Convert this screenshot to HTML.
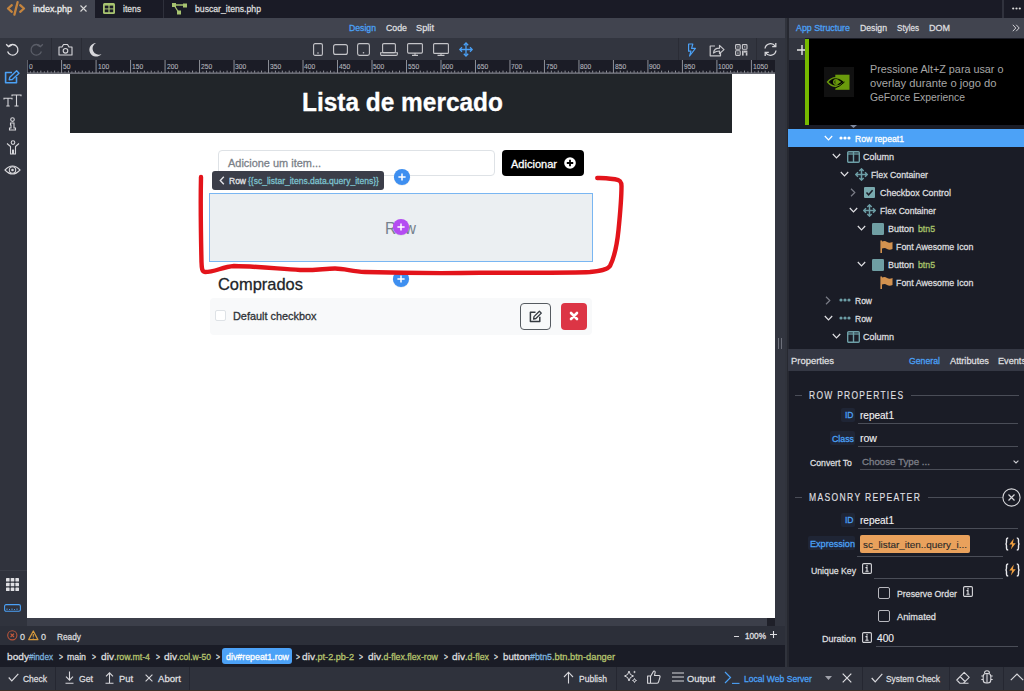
<!DOCTYPE html>
<html><head><meta charset="utf-8">
<style>
*{margin:0;padding:0;box-sizing:border-box}
html,body{width:1024px;height:691px;overflow:hidden;background:#1a1c26;font-family:"Liberation Sans",sans-serif}
.a{position:absolute;display:block}
.t{position:absolute;white-space:nowrap;line-height:1;transform-origin:0 0;-webkit-text-stroke:0.3px currentColor}
</style></head><body>
<div class="a" style="left:0px;top:0px;width:1024px;height:18px;background:#1a1b26;"></div>
<div class="a" style="left:0px;top:0px;width:95px;height:18px;background:#41444f;"></div>
<div class="a" style="left:163px;top:0px;width:1px;height:18px;background:#2e303b;"></div>
<div class="a" style="left:1002px;top:0px;width:2px;height:18px;background:#30323d;"></div>
<div class="a" style="left:0px;top:18px;width:785px;height:20px;background:#41444f;"></div>
<div class="a" style="left:0px;top:38px;width:785px;height:22px;background:#32353f;"></div>
<div class="a" style="left:51px;top:38px;width:1px;height:22px;background:#2a2c35;"></div>
<div class="a" style="left:81px;top:38px;width:1px;height:22px;background:#2a2c35;"></div>
<div class="a" style="left:678px;top:38px;width:1px;height:22px;background:#2a2c35;"></div>
<div class="a" style="left:756px;top:38px;width:1px;height:22px;background:#2a2c35;"></div>
<div class="a" style="left:0px;top:60px;width:27px;height:566px;background:#30333d;"></div>
<div class="a" style="left:0px;top:570px;width:27px;height:1px;background:#3a3d47;"></div>
<div class="a" style="left:27px;top:60px;width:748px;height:14px;background:#1b1c26;"></div>
<div class="a" style="left:27px;top:74px;width:748px;height:544px;background:#ffffff;"></div>
<div class="a" style="left:775px;top:60px;width:10px;height:566px;background:#32353f;"></div>
<div class="a" style="left:27px;top:618px;width:740px;height:8px;background:#3c3f4a;"></div>
<div class="a" style="left:767px;top:618px;width:8px;height:8px;background:#1f2029;"></div>
<div class="a" style="left:0px;top:626px;width:785px;height:19px;background:#2c2f39;"></div>
<div class="a" style="left:0px;top:645px;width:785px;height:22px;background:#1a1c26;"></div>
<div class="a" style="left:0px;top:667px;width:1024px;height:23px;background:#2f323c;"></div>
<div class="a" style="left:0px;top:690px;width:1024px;height:1px;background:#3b3029;"></div>
<div class="a" style="left:785px;top:18px;width:2px;height:649px;background:#30333c;"></div>
<div class="a" style="left:787px;top:18px;width:2px;height:649px;background:#262830;"></div>
<div class="a" style="left:789px;top:18px;width:235px;height:20px;background:#41444f;"></div>
<div class="a" style="left:789px;top:38px;width:235px;height:629px;background:#1a1c26;"></div>
<div class="a" style="left:789px;top:38px;width:16px;height:22px;background:#32353f;"></div>
<svg class="a" style="left:0px;top:0px;" width="30" height="18" viewBox="0 0 30 18"><g fill="none" stroke="#c4843e" stroke-width="2.3" stroke-linecap="round" stroke-linejoin="round"><path d="M11.8 5.2 L8 8.5 L11.8 11.8"/><path d="M20.2 5.2 L24 8.5 L20.2 11.8"/><path d="M17.6 2.2 L14.4 14.6"/></g></svg>
<svg class="a" style="left:80px;top:5px;" width="7" height="7" viewBox="0 0 7 7"><path d="M0.5 0.5L6.5 6.5M6.5 0.5L0.5 6.5" stroke="#d8d8d8" stroke-width="1.1"/></svg>
<svg class="a" style="left:103px;top:3px;" width="12" height="11" viewBox="0 0 12 11"><rect x="0" y="0" width="12" height="11" rx="1.5" fill="#a8c470"/><rect x="1.8" y="2.6" width="3.6" height="2.8" fill="#1b1c27"/><rect x="6.6" y="2.6" width="3.6" height="2.8" fill="#1b1c27"/><rect x="1.8" y="6.4" width="3.6" height="2.8" fill="#1b1c27"/><rect x="6.6" y="6.4" width="3.6" height="2.8" fill="#1b1c27"/></svg>
<svg class="a" style="left:171px;top:2px;" width="17" height="13" viewBox="0 0 17 13"><path d="M3 3 H13 M3 3 L8 11" stroke="#a8c470" stroke-width="1.3" fill="none"/><g fill="#a8c470"><rect x="1" y="1" width="4" height="4"/><rect x="12" y="1.5" width="4" height="4"/><rect x="6" y="8.5" width="4" height="4"/></g></svg>
<svg class="a" style="left:1012px;top:7px;" width="9" height="3" viewBox="0 0 9 3"><circle cx="1.2" cy="1.5" r="1.1" fill="#ddd"/><circle cx="4.5" cy="1.5" r="1.1" fill="#ddd"/><circle cx="7.8" cy="1.5" r="1.1" fill="#ddd"/></svg>
<svg class="a" style="left:1012px;top:24px;" width="8" height="8" viewBox="0 0 8 8"><path d="M0.8 0.8L3.8 4L0.8 7.2M4.2 0.8L7.2 4L4.2 7.2" stroke="#cfcfd4" stroke-width="1" fill="none"/></svg>
<svg class="a" style="left:5px;top:42px;" width="15" height="15" viewBox="0 0 15 15"><path d="M3.5 4.5 A5.3 5.3 0 1 1 2.6 9.5" fill="none" stroke="#dedee2" stroke-width="1.3"/><path d="M1.2 2.2 L3.6 4.8 L6.6 3.2" fill="none" stroke="#dedee2" stroke-width="1.3"/></svg>
<svg class="a" style="left:29px;top:42px;" width="15" height="15" viewBox="0 0 15 15"><path d="M11.5 4.5 A5.3 5.3 0 1 0 12.4 9.5" fill="none" stroke="#5b5e68" stroke-width="1.3"/><path d="M13.8 2.2 L11.4 4.8 L8.4 3.2" fill="none" stroke="#5b5e68" stroke-width="1.3"/></svg>
<svg class="a" style="left:58px;top:43px;" width="15" height="13" viewBox="0 0 15 13"><path d="M1 4 H4 L5.5 1.5 H9.5 L11 4 H14 V12 H1 Z" fill="none" stroke="#d6d6da" stroke-width="1.1" stroke-linejoin="round"/><circle cx="7.5" cy="7.8" r="2.3" fill="none" stroke="#d6d6da" stroke-width="1.1"/></svg>
<svg class="a" style="left:88px;top:42px;" width="14" height="15" viewBox="0 0 14 15"><path d="M8 1 A6.8 6.8 0 1 0 13.5 12 A6 6 0 0 1 8 1 Z" fill="#d8d8dc"/></svg>
<svg class="a" style="left:313px;top:43px;" width="10" height="13" viewBox="0 0 10 13"><rect x="0.6" y="0.6" width="8.8" height="11.8" rx="1.5" fill="none" stroke="#c4c4c8" stroke-width="1.1"/><circle cx="5" cy="10" r="0.8" fill="#c4c4c8"/></svg>
<svg class="a" style="left:333px;top:44px;" width="15" height="11" viewBox="0 0 15 11"><rect x="0.6" y="0.6" width="13.8" height="9.8" rx="2" fill="none" stroke="#c4c4c8" stroke-width="1.1"/></svg>
<svg class="a" style="left:357px;top:43px;" width="13" height="13" viewBox="0 0 13 13"><rect x="0.6" y="0.6" width="11.8" height="11.8" rx="1.8" fill="none" stroke="#c4c4c8" stroke-width="1.1"/><circle cx="6.5" cy="9.8" r="0.8" fill="#c4c4c8"/></svg>
<svg class="a" style="left:380px;top:43px;" width="18" height="13" viewBox="0 0 18 13"><rect x="2.6" y="0.6" width="12.8" height="9" rx="1.2" fill="none" stroke="#c4c4c8" stroke-width="1.1"/><path d="M0.6 9.8 H17.4 V11 Q17.4 12.4 16 12.4 H2 Q0.6 12.4 0.6 11 Z" fill="none" stroke="#c4c4c8" stroke-width="1.1"/></svg>
<svg class="a" style="left:407px;top:43px;" width="16" height="13" viewBox="0 0 16 13"><rect x="0.6" y="0.6" width="14.8" height="9.5" rx="1" fill="none" stroke="#c4c4c8" stroke-width="1.1"/><path d="M8 10 V12 M5 12.4 H11" stroke="#c4c4c8" stroke-width="1.1"/></svg>
<svg class="a" style="left:433px;top:43px;" width="16" height="13" viewBox="0 0 16 13"><rect x="0.6" y="0.6" width="14.8" height="9.8" rx="1" fill="none" stroke="#c4c4c8" stroke-width="1.1"/><path d="M8 10.4 V12.2 M4.5 12.4 H11.5" stroke="#c4c4c8" stroke-width="1.1"/></svg>
<svg class="a" style="left:459px;top:42px;" width="14" height="15" viewBox="0 0 14 15"><g fill="none" stroke="#4ba1f6" stroke-width="1.3"><path d="M7 1 V14 M0.8 7.5 H13.2"/><path d="M4.8 3.2 L7 1 L9.2 3.2 M4.8 11.8 L7 14 L9.2 11.8 M3 5.3 L0.8 7.5 L3 9.7 M11 5.3 L13.2 7.5 L11 9.7"/></g></svg>
<svg class="a" style="left:687px;top:43px;" width="10" height="14" viewBox="0 0 10 14"><path d="M1.6 1 H5.8 L4.6 5.4 H8.4 L2.6 13 L3.9 8.2 H1.6 Z" fill="none" stroke="#4ba1f6" stroke-width="1.2" stroke-linejoin="round"/></svg>
<svg class="a" style="left:709px;top:43px;" width="16" height="14" viewBox="0 0 16 14"><path d="M6 3 H1.2 V12.8 H11.5 V9.5" fill="none" stroke="#c8c8cc" stroke-width="1.2" stroke-linejoin="round"/><path d="M4.5 10 Q5 5.2 10.5 5.2 V2.4 L15 6.6 L10.5 10.6 V8 Q7 8 4.5 10 Z" fill="none" stroke="#c8c8cc" stroke-width="1.2" stroke-linejoin="round"/></svg>
<svg class="a" style="left:735px;top:44px;" width="13" height="12" viewBox="0 0 13 12"><g fill="none" stroke="#c8c8cc" stroke-width="1.1"><rect x="0.6" y="0.6" width="4.6" height="4.6" rx="0.8"/><rect x="7.4" y="0.6" width="4.6" height="4.6" rx="0.8"/><rect x="0.6" y="6.8" width="4.6" height="4.6" rx="0.8"/></g><g fill="#c8c8cc"><rect x="2.3" y="2.3" width="1.2" height="1.2"/><rect x="9.1" y="2.3" width="1.2" height="1.2"/><rect x="2.3" y="8.5" width="1.2" height="1.2"/><rect x="7" y="6.6" width="1.6" height="5"/><rect x="8.6" y="6.6" width="3.8" height="2"/><rect x="10.8" y="8.6" width="1.6" height="3"/></g></svg>
<svg class="a" style="left:763px;top:42px;" width="15" height="15" viewBox="0 0 15 15"><g fill="none" stroke="#d6d6da" stroke-width="1.3"><path d="M2 6.5 A5.6 5.6 0 0 1 12.2 4.2"/><path d="M13 8.5 A5.6 5.6 0 0 1 2.8 10.8"/><path d="M12.8 1 V4.6 H9.2"/><path d="M2.2 14 V10.4 H5.8"/></g></svg>
<svg class="a" style="left:797px;top:45px;" width="10" height="10" viewBox="0 0 10 10"><path d="M5 0 V10 M0 5 H10" stroke="#e6e6e6" stroke-width="1.4"/></svg>
<svg class="a" style="left:4px;top:70px;" width="16" height="14" viewBox="0 0 16 14"><path d="M8 2.5 H1.6 V12.8 H12.5 V7" fill="none" stroke="#4ba1f6" stroke-width="1.6" stroke-linejoin="round"/><path d="M5.2 9.8 L5.8 7.2 L12.6 0.8 L15 3.2 L8.3 9.6 Z" fill="none" stroke="#4ba1f6" stroke-width="1.4" stroke-linejoin="round"/></svg>
<svg class="a" style="left:3px;top:94px;" width="19" height="13" viewBox="0 0 19 13"><g fill="none" stroke="#d6d6da" stroke-width="1.1"><path d="M1 5.5 V4.3 H9 V5.5 M5 4.3 V12 M3.3 12 H6.7"/><path d="M9 2.2 V1 H18 V2.2 M13.5 1 V12 M11.5 12 H15.5"/></g></svg>
<svg class="a" style="left:8px;top:117px;" width="9" height="14" viewBox="0 0 9 14"><g fill="none" stroke="#d6d6da" stroke-width="1.1"><circle cx="4.5" cy="2.6" r="1.8"/><path d="M2.5 6 H6 V11 H7.5 V13 H1.5 V11 H3 V8 H2.5 Z"/></g></svg>
<svg class="a" style="left:6px;top:140px;" width="14" height="15" viewBox="0 0 14 15"><g fill="none" stroke="#d6d6da" stroke-width="1.1" stroke-linejoin="round"><circle cx="7" cy="2.6" r="1.8"/><path d="M1 3.5 L4.5 6.5 V14 H6.5 V10 H7.5 V14 H9.5 V6.5 L13 3.5"/></g></svg>
<svg class="a" style="left:4px;top:163px;" width="17" height="14" viewBox="0 0 17 14"><path d="M1 7 Q8.5 -1 16 7 Q8.5 15 1 7 Z" fill="none" stroke="#d6d6da" stroke-width="1.1"/><circle cx="8.5" cy="7" r="3.2" fill="none" stroke="#d6d6da" stroke-width="1.1"/><circle cx="8.5" cy="7" r="1.3" fill="#d6d6da"/></svg>
<svg class="a" style="left:6px;top:578px;" width="13" height="13" viewBox="0 0 13 13"><g fill="#e0e0e4"><rect x="0" y="0" width="3.6" height="3.6" rx=".6"/><rect x="4.7" y="0" width="3.6" height="3.6" rx=".6"/><rect x="9.4" y="0" width="3.6" height="3.6" rx=".6"/><rect x="0" y="4.7" width="3.6" height="3.6" rx=".6"/><rect x="4.7" y="4.7" width="3.6" height="3.6" rx=".6"/><rect x="9.4" y="4.7" width="3.6" height="3.6" rx=".6"/><rect x="0" y="9.4" width="3.6" height="3.6" rx=".6"/><rect x="4.7" y="9.4" width="3.6" height="3.6" rx=".6"/><rect x="9.4" y="9.4" width="3.6" height="3.6" rx=".6"/></g></svg>
<svg class="a" style="left:4px;top:604px;" width="17" height="8" viewBox="0 0 17 8"><rect x="0.6" y="0.6" width="15.8" height="6.6" rx="1.5" fill="none" stroke="#4ba1f6" stroke-width="1.1"/><path d="M3 6 V4.5 M5.5 6 V5 M8 6 V4.5 M10.5 6 V5 M13 6 V4.5" stroke="#4ba1f6" stroke-width="0.9"/></svg>
<svg class="a" style="left:27px;top:60px;" width="748" height="14" viewBox="0 0 748 14"><rect x="0" y="12.6" width="748" height="1" fill="#9c9ea6"/><rect x="-0.40" y="0" width="1" height="13" fill="#8e9098"/><rect x="3.05" y="11.40" width="0.9" height="1.2" fill="#9c9ea6"/><rect x="6.50" y="10.60" width="0.9" height="2.0" fill="#9c9ea6"/><rect x="9.95" y="11.40" width="0.9" height="1.2" fill="#9c9ea6"/><rect x="13.40" y="10.60" width="0.9" height="2.0" fill="#9c9ea6"/><rect x="16.85" y="11.40" width="0.9" height="1.2" fill="#9c9ea6"/><rect x="20.29" y="10.60" width="0.9" height="2.0" fill="#9c9ea6"/><rect x="23.74" y="11.40" width="0.9" height="1.2" fill="#9c9ea6"/><rect x="27.19" y="10.60" width="0.9" height="2.0" fill="#9c9ea6"/><rect x="30.64" y="11.40" width="0.9" height="1.2" fill="#9c9ea6"/><rect x="34.09" y="0" width="1" height="13" fill="#8e9098"/><rect x="37.54" y="11.40" width="0.9" height="1.2" fill="#9c9ea6"/><rect x="40.99" y="10.60" width="0.9" height="2.0" fill="#9c9ea6"/><rect x="44.44" y="11.40" width="0.9" height="1.2" fill="#9c9ea6"/><rect x="47.89" y="10.60" width="0.9" height="2.0" fill="#9c9ea6"/><rect x="51.34" y="11.40" width="0.9" height="1.2" fill="#9c9ea6"/><rect x="54.78" y="10.60" width="0.9" height="2.0" fill="#9c9ea6"/><rect x="58.23" y="11.40" width="0.9" height="1.2" fill="#9c9ea6"/><rect x="61.68" y="10.60" width="0.9" height="2.0" fill="#9c9ea6"/><rect x="65.13" y="11.40" width="0.9" height="1.2" fill="#9c9ea6"/><rect x="68.58" y="0" width="1" height="13" fill="#8e9098"/><rect x="72.03" y="11.40" width="0.9" height="1.2" fill="#9c9ea6"/><rect x="75.48" y="10.60" width="0.9" height="2.0" fill="#9c9ea6"/><rect x="78.93" y="11.40" width="0.9" height="1.2" fill="#9c9ea6"/><rect x="82.38" y="10.60" width="0.9" height="2.0" fill="#9c9ea6"/><rect x="85.83" y="11.40" width="0.9" height="1.2" fill="#9c9ea6"/><rect x="89.27" y="10.60" width="0.9" height="2.0" fill="#9c9ea6"/><rect x="92.72" y="11.40" width="0.9" height="1.2" fill="#9c9ea6"/><rect x="96.17" y="10.60" width="0.9" height="2.0" fill="#9c9ea6"/><rect x="99.62" y="11.40" width="0.9" height="1.2" fill="#9c9ea6"/><rect x="103.07" y="0" width="1" height="13" fill="#8e9098"/><rect x="106.52" y="11.40" width="0.9" height="1.2" fill="#9c9ea6"/><rect x="109.97" y="10.60" width="0.9" height="2.0" fill="#9c9ea6"/><rect x="113.42" y="11.40" width="0.9" height="1.2" fill="#9c9ea6"/><rect x="116.87" y="10.60" width="0.9" height="2.0" fill="#9c9ea6"/><rect x="120.31" y="11.40" width="0.9" height="1.2" fill="#9c9ea6"/><rect x="123.76" y="10.60" width="0.9" height="2.0" fill="#9c9ea6"/><rect x="127.21" y="11.40" width="0.9" height="1.2" fill="#9c9ea6"/><rect x="130.66" y="10.60" width="0.9" height="2.0" fill="#9c9ea6"/><rect x="134.11" y="11.40" width="0.9" height="1.2" fill="#9c9ea6"/><rect x="137.56" y="0" width="1" height="13" fill="#8e9098"/><rect x="141.01" y="11.40" width="0.9" height="1.2" fill="#9c9ea6"/><rect x="144.46" y="10.60" width="0.9" height="2.0" fill="#9c9ea6"/><rect x="147.91" y="11.40" width="0.9" height="1.2" fill="#9c9ea6"/><rect x="151.36" y="10.60" width="0.9" height="2.0" fill="#9c9ea6"/><rect x="154.81" y="11.40" width="0.9" height="1.2" fill="#9c9ea6"/><rect x="158.25" y="10.60" width="0.9" height="2.0" fill="#9c9ea6"/><rect x="161.70" y="11.40" width="0.9" height="1.2" fill="#9c9ea6"/><rect x="165.15" y="10.60" width="0.9" height="2.0" fill="#9c9ea6"/><rect x="168.60" y="11.40" width="0.9" height="1.2" fill="#9c9ea6"/><rect x="172.05" y="0" width="1" height="13" fill="#8e9098"/><rect x="175.50" y="11.40" width="0.9" height="1.2" fill="#9c9ea6"/><rect x="178.95" y="10.60" width="0.9" height="2.0" fill="#9c9ea6"/><rect x="182.40" y="11.40" width="0.9" height="1.2" fill="#9c9ea6"/><rect x="185.85" y="10.60" width="0.9" height="2.0" fill="#9c9ea6"/><rect x="189.30" y="11.40" width="0.9" height="1.2" fill="#9c9ea6"/><rect x="192.74" y="10.60" width="0.9" height="2.0" fill="#9c9ea6"/><rect x="196.19" y="11.40" width="0.9" height="1.2" fill="#9c9ea6"/><rect x="199.64" y="10.60" width="0.9" height="2.0" fill="#9c9ea6"/><rect x="203.09" y="11.40" width="0.9" height="1.2" fill="#9c9ea6"/><rect x="206.54" y="0" width="1" height="13" fill="#8e9098"/><rect x="209.99" y="11.40" width="0.9" height="1.2" fill="#9c9ea6"/><rect x="213.44" y="10.60" width="0.9" height="2.0" fill="#9c9ea6"/><rect x="216.89" y="11.40" width="0.9" height="1.2" fill="#9c9ea6"/><rect x="220.34" y="10.60" width="0.9" height="2.0" fill="#9c9ea6"/><rect x="223.78" y="11.40" width="0.9" height="1.2" fill="#9c9ea6"/><rect x="227.23" y="10.60" width="0.9" height="2.0" fill="#9c9ea6"/><rect x="230.68" y="11.40" width="0.9" height="1.2" fill="#9c9ea6"/><rect x="234.13" y="10.60" width="0.9" height="2.0" fill="#9c9ea6"/><rect x="237.58" y="11.40" width="0.9" height="1.2" fill="#9c9ea6"/><rect x="241.03" y="0" width="1" height="13" fill="#8e9098"/><rect x="244.48" y="11.40" width="0.9" height="1.2" fill="#9c9ea6"/><rect x="247.93" y="10.60" width="0.9" height="2.0" fill="#9c9ea6"/><rect x="251.38" y="11.40" width="0.9" height="1.2" fill="#9c9ea6"/><rect x="254.83" y="10.60" width="0.9" height="2.0" fill="#9c9ea6"/><rect x="258.28" y="11.40" width="0.9" height="1.2" fill="#9c9ea6"/><rect x="261.72" y="10.60" width="0.9" height="2.0" fill="#9c9ea6"/><rect x="265.17" y="11.40" width="0.9" height="1.2" fill="#9c9ea6"/><rect x="268.62" y="10.60" width="0.9" height="2.0" fill="#9c9ea6"/><rect x="272.07" y="11.40" width="0.9" height="1.2" fill="#9c9ea6"/><rect x="275.52" y="0" width="1" height="13" fill="#8e9098"/><rect x="278.97" y="11.40" width="0.9" height="1.2" fill="#9c9ea6"/><rect x="282.42" y="10.60" width="0.9" height="2.0" fill="#9c9ea6"/><rect x="285.87" y="11.40" width="0.9" height="1.2" fill="#9c9ea6"/><rect x="289.32" y="10.60" width="0.9" height="2.0" fill="#9c9ea6"/><rect x="292.77" y="11.40" width="0.9" height="1.2" fill="#9c9ea6"/><rect x="296.21" y="10.60" width="0.9" height="2.0" fill="#9c9ea6"/><rect x="299.66" y="11.40" width="0.9" height="1.2" fill="#9c9ea6"/><rect x="303.11" y="10.60" width="0.9" height="2.0" fill="#9c9ea6"/><rect x="306.56" y="11.40" width="0.9" height="1.2" fill="#9c9ea6"/><rect x="310.01" y="0" width="1" height="13" fill="#8e9098"/><rect x="313.46" y="11.40" width="0.9" height="1.2" fill="#9c9ea6"/><rect x="316.91" y="10.60" width="0.9" height="2.0" fill="#9c9ea6"/><rect x="320.36" y="11.40" width="0.9" height="1.2" fill="#9c9ea6"/><rect x="323.81" y="10.60" width="0.9" height="2.0" fill="#9c9ea6"/><rect x="327.26" y="11.40" width="0.9" height="1.2" fill="#9c9ea6"/><rect x="330.70" y="10.60" width="0.9" height="2.0" fill="#9c9ea6"/><rect x="334.15" y="11.40" width="0.9" height="1.2" fill="#9c9ea6"/><rect x="337.60" y="10.60" width="0.9" height="2.0" fill="#9c9ea6"/><rect x="341.05" y="11.40" width="0.9" height="1.2" fill="#9c9ea6"/><rect x="344.50" y="0" width="1" height="13" fill="#8e9098"/><rect x="347.95" y="11.40" width="0.9" height="1.2" fill="#9c9ea6"/><rect x="351.40" y="10.60" width="0.9" height="2.0" fill="#9c9ea6"/><rect x="354.85" y="11.40" width="0.9" height="1.2" fill="#9c9ea6"/><rect x="358.30" y="10.60" width="0.9" height="2.0" fill="#9c9ea6"/><rect x="361.75" y="11.40" width="0.9" height="1.2" fill="#9c9ea6"/><rect x="365.19" y="10.60" width="0.9" height="2.0" fill="#9c9ea6"/><rect x="368.64" y="11.40" width="0.9" height="1.2" fill="#9c9ea6"/><rect x="372.09" y="10.60" width="0.9" height="2.0" fill="#9c9ea6"/><rect x="375.54" y="11.40" width="0.9" height="1.2" fill="#9c9ea6"/><rect x="378.99" y="0" width="1" height="13" fill="#8e9098"/><rect x="382.44" y="11.40" width="0.9" height="1.2" fill="#9c9ea6"/><rect x="385.89" y="10.60" width="0.9" height="2.0" fill="#9c9ea6"/><rect x="389.34" y="11.40" width="0.9" height="1.2" fill="#9c9ea6"/><rect x="392.79" y="10.60" width="0.9" height="2.0" fill="#9c9ea6"/><rect x="396.24" y="11.40" width="0.9" height="1.2" fill="#9c9ea6"/><rect x="399.68" y="10.60" width="0.9" height="2.0" fill="#9c9ea6"/><rect x="403.13" y="11.40" width="0.9" height="1.2" fill="#9c9ea6"/><rect x="406.58" y="10.60" width="0.9" height="2.0" fill="#9c9ea6"/><rect x="410.03" y="11.40" width="0.9" height="1.2" fill="#9c9ea6"/><rect x="413.48" y="0" width="1" height="13" fill="#8e9098"/><rect x="416.93" y="11.40" width="0.9" height="1.2" fill="#9c9ea6"/><rect x="420.38" y="10.60" width="0.9" height="2.0" fill="#9c9ea6"/><rect x="423.83" y="11.40" width="0.9" height="1.2" fill="#9c9ea6"/><rect x="427.28" y="10.60" width="0.9" height="2.0" fill="#9c9ea6"/><rect x="430.73" y="11.40" width="0.9" height="1.2" fill="#9c9ea6"/><rect x="434.17" y="10.60" width="0.9" height="2.0" fill="#9c9ea6"/><rect x="437.62" y="11.40" width="0.9" height="1.2" fill="#9c9ea6"/><rect x="441.07" y="10.60" width="0.9" height="2.0" fill="#9c9ea6"/><rect x="444.52" y="11.40" width="0.9" height="1.2" fill="#9c9ea6"/><rect x="447.97" y="0" width="1" height="13" fill="#8e9098"/><rect x="451.42" y="11.40" width="0.9" height="1.2" fill="#9c9ea6"/><rect x="454.87" y="10.60" width="0.9" height="2.0" fill="#9c9ea6"/><rect x="458.32" y="11.40" width="0.9" height="1.2" fill="#9c9ea6"/><rect x="461.77" y="10.60" width="0.9" height="2.0" fill="#9c9ea6"/><rect x="465.22" y="11.40" width="0.9" height="1.2" fill="#9c9ea6"/><rect x="468.66" y="10.60" width="0.9" height="2.0" fill="#9c9ea6"/><rect x="472.11" y="11.40" width="0.9" height="1.2" fill="#9c9ea6"/><rect x="475.56" y="10.60" width="0.9" height="2.0" fill="#9c9ea6"/><rect x="479.01" y="11.40" width="0.9" height="1.2" fill="#9c9ea6"/><rect x="482.46" y="0" width="1" height="13" fill="#8e9098"/><rect x="485.91" y="11.40" width="0.9" height="1.2" fill="#9c9ea6"/><rect x="489.36" y="10.60" width="0.9" height="2.0" fill="#9c9ea6"/><rect x="492.81" y="11.40" width="0.9" height="1.2" fill="#9c9ea6"/><rect x="496.26" y="10.60" width="0.9" height="2.0" fill="#9c9ea6"/><rect x="499.71" y="11.40" width="0.9" height="1.2" fill="#9c9ea6"/><rect x="503.15" y="10.60" width="0.9" height="2.0" fill="#9c9ea6"/><rect x="506.60" y="11.40" width="0.9" height="1.2" fill="#9c9ea6"/><rect x="510.05" y="10.60" width="0.9" height="2.0" fill="#9c9ea6"/><rect x="513.50" y="11.40" width="0.9" height="1.2" fill="#9c9ea6"/><rect x="516.95" y="0" width="1" height="13" fill="#8e9098"/><rect x="520.40" y="11.40" width="0.9" height="1.2" fill="#9c9ea6"/><rect x="523.85" y="10.60" width="0.9" height="2.0" fill="#9c9ea6"/><rect x="527.30" y="11.40" width="0.9" height="1.2" fill="#9c9ea6"/><rect x="530.75" y="10.60" width="0.9" height="2.0" fill="#9c9ea6"/><rect x="534.20" y="11.40" width="0.9" height="1.2" fill="#9c9ea6"/><rect x="537.64" y="10.60" width="0.9" height="2.0" fill="#9c9ea6"/><rect x="541.09" y="11.40" width="0.9" height="1.2" fill="#9c9ea6"/><rect x="544.54" y="10.60" width="0.9" height="2.0" fill="#9c9ea6"/><rect x="547.99" y="11.40" width="0.9" height="1.2" fill="#9c9ea6"/><rect x="551.44" y="0" width="1" height="13" fill="#8e9098"/><rect x="554.89" y="11.40" width="0.9" height="1.2" fill="#9c9ea6"/><rect x="558.34" y="10.60" width="0.9" height="2.0" fill="#9c9ea6"/><rect x="561.79" y="11.40" width="0.9" height="1.2" fill="#9c9ea6"/><rect x="565.24" y="10.60" width="0.9" height="2.0" fill="#9c9ea6"/><rect x="568.69" y="11.40" width="0.9" height="1.2" fill="#9c9ea6"/><rect x="572.13" y="10.60" width="0.9" height="2.0" fill="#9c9ea6"/><rect x="575.58" y="11.40" width="0.9" height="1.2" fill="#9c9ea6"/><rect x="579.03" y="10.60" width="0.9" height="2.0" fill="#9c9ea6"/><rect x="582.48" y="11.40" width="0.9" height="1.2" fill="#9c9ea6"/><rect x="585.93" y="0" width="1" height="13" fill="#8e9098"/><rect x="589.38" y="11.40" width="0.9" height="1.2" fill="#9c9ea6"/><rect x="592.83" y="10.60" width="0.9" height="2.0" fill="#9c9ea6"/><rect x="596.28" y="11.40" width="0.9" height="1.2" fill="#9c9ea6"/><rect x="599.73" y="10.60" width="0.9" height="2.0" fill="#9c9ea6"/><rect x="603.18" y="11.40" width="0.9" height="1.2" fill="#9c9ea6"/><rect x="606.62" y="10.60" width="0.9" height="2.0" fill="#9c9ea6"/><rect x="610.07" y="11.40" width="0.9" height="1.2" fill="#9c9ea6"/><rect x="613.52" y="10.60" width="0.9" height="2.0" fill="#9c9ea6"/><rect x="616.97" y="11.40" width="0.9" height="1.2" fill="#9c9ea6"/><rect x="620.42" y="0" width="1" height="13" fill="#8e9098"/><rect x="623.87" y="11.40" width="0.9" height="1.2" fill="#9c9ea6"/><rect x="627.32" y="10.60" width="0.9" height="2.0" fill="#9c9ea6"/><rect x="630.77" y="11.40" width="0.9" height="1.2" fill="#9c9ea6"/><rect x="634.22" y="10.60" width="0.9" height="2.0" fill="#9c9ea6"/><rect x="637.67" y="11.40" width="0.9" height="1.2" fill="#9c9ea6"/><rect x="641.11" y="10.60" width="0.9" height="2.0" fill="#9c9ea6"/><rect x="644.56" y="11.40" width="0.9" height="1.2" fill="#9c9ea6"/><rect x="648.01" y="10.60" width="0.9" height="2.0" fill="#9c9ea6"/><rect x="651.46" y="11.40" width="0.9" height="1.2" fill="#9c9ea6"/><rect x="654.91" y="0" width="1" height="13" fill="#8e9098"/><rect x="658.36" y="11.40" width="0.9" height="1.2" fill="#9c9ea6"/><rect x="661.81" y="10.60" width="0.9" height="2.0" fill="#9c9ea6"/><rect x="665.26" y="11.40" width="0.9" height="1.2" fill="#9c9ea6"/><rect x="668.71" y="10.60" width="0.9" height="2.0" fill="#9c9ea6"/><rect x="672.16" y="11.40" width="0.9" height="1.2" fill="#9c9ea6"/><rect x="675.60" y="10.60" width="0.9" height="2.0" fill="#9c9ea6"/><rect x="679.05" y="11.40" width="0.9" height="1.2" fill="#9c9ea6"/><rect x="682.50" y="10.60" width="0.9" height="2.0" fill="#9c9ea6"/><rect x="685.95" y="11.40" width="0.9" height="1.2" fill="#9c9ea6"/><rect x="689.40" y="0" width="1" height="13" fill="#8e9098"/><rect x="692.85" y="11.40" width="0.9" height="1.2" fill="#9c9ea6"/><rect x="696.30" y="10.60" width="0.9" height="2.0" fill="#9c9ea6"/><rect x="699.75" y="11.40" width="0.9" height="1.2" fill="#9c9ea6"/><rect x="703.20" y="10.60" width="0.9" height="2.0" fill="#9c9ea6"/><rect x="706.65" y="11.40" width="0.9" height="1.2" fill="#9c9ea6"/><rect x="710.09" y="10.60" width="0.9" height="2.0" fill="#9c9ea6"/><rect x="713.54" y="11.40" width="0.9" height="1.2" fill="#9c9ea6"/><rect x="716.99" y="10.60" width="0.9" height="2.0" fill="#9c9ea6"/><rect x="720.44" y="11.40" width="0.9" height="1.2" fill="#9c9ea6"/><rect x="723.89" y="0" width="1" height="13" fill="#8e9098"/><rect x="727.34" y="11.40" width="0.9" height="1.2" fill="#9c9ea6"/><rect x="730.79" y="10.60" width="0.9" height="2.0" fill="#9c9ea6"/><rect x="734.24" y="11.40" width="0.9" height="1.2" fill="#9c9ea6"/><rect x="737.69" y="10.60" width="0.9" height="2.0" fill="#9c9ea6"/><rect x="741.14" y="11.40" width="0.9" height="1.2" fill="#9c9ea6"/><rect x="744.58" y="10.60" width="0.9" height="2.0" fill="#9c9ea6"/></svg>
<div class="a" style="left:70px;top:74px;width:662px;height:59px;background:#212529;"></div>
<div class="a" style="left:218px;top:150px;width:277px;height:26px;background:#ffffff;border:1px solid #dee2e6;border-radius:4px"></div>
<div class="a" style="left:502px;top:150px;width:82px;height:26px;background:#000000;border-radius:4px"></div>
<svg class="a" style="left:564px;top:157px;" width="12" height="12" viewBox="0 0 12 12"><circle cx="6" cy="6" r="5.8" fill="#fff"/><path d="M6 2.8 V9.2 M2.8 6 H9.2" stroke="#000" stroke-width="1.8"/></svg>
<div class="a" style="left:209px;top:193px;width:384px;height:69px;background:#ebeff2;border:1px solid #79b6f2"></div>
<div class="a" style="left:212px;top:171px;width:172px;height:19px;background:#3b3e49;border-radius:3px"></div>
<svg class="a" style="left:219px;top:176px;" width="6" height="9" viewBox="0 0 6 9"><path d="M4.8 0.8 L1.3 4.5 L4.8 8.2" fill="none" stroke="#e4e4e8" stroke-width="1.4"/></svg>
<div class="a" style="left:210px;top:298px;width:382px;height:37px;background:#f8f9fa;border-radius:4px"></div>
<div class="a" style="left:215px;top:310px;width:11px;height:11px;background:#ffffff;border:1px solid #dee2e6;border-radius:2px"></div>
<div class="a" style="left:520px;top:303px;width:31px;height:27px;background:transparent;border:1px solid #565b61;border-radius:4px"></div>
<svg class="a" style="left:529px;top:310px;" width="13" height="13" viewBox="0 0 13 13"><path d="M6.5 2.2 H1.4 V11.6 H10.8 V6.8" fill="none" stroke="#343a40" stroke-width="1.5" stroke-linejoin="round"/><path d="M4.6 9 L5 6.6 L10.4 1.2 L12.3 3.1 L6.9 8.5 Z" fill="none" stroke="#343a40" stroke-width="1.3" stroke-linejoin="round"/></svg>
<div class="a" style="left:561px;top:303px;width:26px;height:27px;background:#dc3545;border-radius:4px"></div>
<svg class="a" style="left:569px;top:311px;" width="10" height="10" viewBox="0 0 10 10"><path d="M2 2 L8 8 M8 2 L2 8" stroke="#fff" stroke-width="2.6" stroke-linecap="round"/></svg>
<div class="a" style="left:805px;top:39px;width:4px;height:86px;background:#76b900;"></div>
<div class="a" style="left:809px;top:39px;width:215px;height:86px;background:#000000;"></div>
<svg class="a" style="left:824px;top:67px;" width="30" height="30" viewBox="0 0 30 30"><rect width="30" height="30" fill="#111111"/><rect x="11.3" y="7.7" width="14.2" height="15.1" fill="#6a9a0c"/><path d="M3.6 15 Q11 6.5 20.5 15 Q11 23.5 3.6 15 Z" fill="none" stroke="#6a9a0c" stroke-width="1.5"/><path d="M7 15 Q12 9.8 18.5 15 Q12 20.2 7 15 Z" fill="none" stroke="#000" stroke-width="1.3"/><path d="M5.3 15 Q11 8.2 19.5 15" fill="none" stroke="#000" stroke-width="0.7"/><circle cx="12" cy="15" r="2.3" fill="none" stroke="#6a9a0c" stroke-width="1.3"/><path d="M20.5 15 Q15 20 11 21" fill="none" stroke="#000" stroke-width="1"/></svg>
<svg class="a" style="left:850px;top:125px;" width="7" height="4" viewBox="0 0 7 4"><path d="M0 0 H7 L3.5 3 Z" fill="#7f8aa0"/></svg>
<div class="a" style="left:788px;top:129px;width:236px;height:18px;background:#4ca2f7;"></div>
<svg class="a" style="left:824px;top:135px;" width="9" height="6" viewBox="0 0 9 6"><path d="M0.8 1 L4.5 4.8 L8.2 1" fill="none" stroke="#ffffff" stroke-width="1.2"/></svg>
<svg class="a" style="left:839px;top:136px;" width="12" height="4" viewBox="0 0 12 4"><circle cx="2" cy="2" r="1.6" fill="#ffffff"/><circle cx="6" cy="2" r="1.6" fill="#ffffff"/><circle cx="10" cy="2" r="1.6" fill="#ffffff"/></svg>
<svg class="a" style="left:832px;top:153px;" width="9" height="6" viewBox="0 0 9 6"><path d="M0.8 1 L4.5 4.8 L8.2 1" fill="none" stroke="#e0e0e4" stroke-width="1.2"/></svg>
<svg class="a" style="left:847px;top:150.5px;" width="13" height="12" viewBox="0 0 13 12"><rect x="0.7" y="0.7" width="11.6" height="10.6" rx="1" fill="none" stroke="#6d9ea6" stroke-width="1.4"/><path d="M6.5 1 V11" stroke="#6d9ea6" stroke-width="1.4"/><path d="M1 3 H12" stroke="#6d9ea6" stroke-width="1.2"/></svg>
<svg class="a" style="left:840px;top:171px;" width="9" height="6" viewBox="0 0 9 6"><path d="M0.8 1 L4.5 4.8 L8.2 1" fill="none" stroke="#e0e0e4" stroke-width="1.2"/></svg>
<svg class="a" style="left:855px;top:168.0px;" width="13" height="13" viewBox="0 0 13 13"><g fill="none" stroke="#6d9ea6" stroke-width="1.5"><path d="M6.5 1 V12 M1 6.5 H12"/><path d="M4.3 3 L6.5 0.9 L8.7 3 M4.3 10 L6.5 12.1 L8.7 10 M3 4.3 L0.9 6.5 L3 8.7 M10 4.3 L12.1 6.5 L10 8.7"/></g></svg>
<svg class="a" style="left:850px;top:187.5px;" width="6" height="9" viewBox="0 0 6 9"><path d="M1 0.8 L4.8 4.5 L1 8.2" fill="none" stroke="#7a7c86" stroke-width="1.2"/></svg>
<svg class="a" style="left:864px;top:187.0px;" width="11" height="11" viewBox="0 0 11 11"><rect width="11" height="11" rx="1" fill="#79a9ae"/><path d="M2.5 5.5 L4.6 7.8 L8.6 3.2" fill="none" stroke="#1b1d27" stroke-width="1.5"/></svg>
<svg class="a" style="left:849px;top:207px;" width="9" height="6" viewBox="0 0 9 6"><path d="M0.8 1 L4.5 4.8 L8.2 1" fill="none" stroke="#e0e0e4" stroke-width="1.2"/></svg>
<svg class="a" style="left:863px;top:204.0px;" width="13" height="13" viewBox="0 0 13 13"><g fill="none" stroke="#6d9ea6" stroke-width="1.5"><path d="M6.5 1 V12 M1 6.5 H12"/><path d="M4.3 3 L6.5 0.9 L8.7 3 M4.3 10 L6.5 12.1 L8.7 10 M3 4.3 L0.9 6.5 L3 8.7 M10 4.3 L12.1 6.5 L10 8.7"/></g></svg>
<svg class="a" style="left:857px;top:225px;" width="9" height="6" viewBox="0 0 9 6"><path d="M0.8 1 L4.5 4.8 L8.2 1" fill="none" stroke="#e0e0e4" stroke-width="1.2"/></svg>
<svg class="a" style="left:872px;top:222.5px;" width="12" height="12" viewBox="0 0 12 12"><rect width="12" height="12" rx="1.2" fill="#6f9ea3"/></svg>
<svg class="a" style="left:880px;top:239.5px;" width="13" height="13" viewBox="0 0 13 13"><path d="M1.2 0.5 V13" stroke="#d3924f" stroke-width="1.6"/><path d="M2 1.5 Q5 0.5 7 2 Q9.5 3.5 12.5 2 V9 Q9.5 10.5 7 9 Q5 7.5 2 8.5 Z" fill="#d3924f"/></svg>
<svg class="a" style="left:857px;top:261px;" width="9" height="6" viewBox="0 0 9 6"><path d="M0.8 1 L4.5 4.8 L8.2 1" fill="none" stroke="#e0e0e4" stroke-width="1.2"/></svg>
<svg class="a" style="left:872px;top:258.5px;" width="12" height="12" viewBox="0 0 12 12"><rect width="12" height="12" rx="1.2" fill="#6f9ea3"/></svg>
<svg class="a" style="left:880px;top:275.5px;" width="13" height="13" viewBox="0 0 13 13"><path d="M1.2 0.5 V13" stroke="#d3924f" stroke-width="1.6"/><path d="M2 1.5 Q5 0.5 7 2 Q9.5 3.5 12.5 2 V9 Q9.5 10.5 7 9 Q5 7.5 2 8.5 Z" fill="#d3924f"/></svg>
<svg class="a" style="left:825px;top:295.5px;" width="6" height="9" viewBox="0 0 6 9"><path d="M1 0.8 L4.8 4.5 L1 8.2" fill="none" stroke="#7a7c86" stroke-width="1.2"/></svg>
<svg class="a" style="left:839px;top:298px;" width="12" height="4" viewBox="0 0 12 4"><circle cx="2" cy="2" r="1.6" fill="#6d9ea6"/><circle cx="6" cy="2" r="1.6" fill="#6d9ea6"/><circle cx="10" cy="2" r="1.6" fill="#6d9ea6"/></svg>
<svg class="a" style="left:824px;top:315px;" width="9" height="6" viewBox="0 0 9 6"><path d="M0.8 1 L4.5 4.8 L8.2 1" fill="none" stroke="#e0e0e4" stroke-width="1.2"/></svg>
<svg class="a" style="left:839px;top:316px;" width="12" height="4" viewBox="0 0 12 4"><circle cx="2" cy="2" r="1.6" fill="#6d9ea6"/><circle cx="6" cy="2" r="1.6" fill="#6d9ea6"/><circle cx="10" cy="2" r="1.6" fill="#6d9ea6"/></svg>
<svg class="a" style="left:832px;top:333px;" width="9" height="6" viewBox="0 0 9 6"><path d="M0.8 1 L4.5 4.8 L8.2 1" fill="none" stroke="#e0e0e4" stroke-width="1.2"/></svg>
<svg class="a" style="left:847px;top:330.5px;" width="13" height="12" viewBox="0 0 13 12"><rect x="0.7" y="0.7" width="11.6" height="10.6" rx="1" fill="none" stroke="#6d9ea6" stroke-width="1.4"/><path d="M6.5 1 V11" stroke="#6d9ea6" stroke-width="1.4"/><path d="M1 3 H12" stroke="#6d9ea6" stroke-width="1.2"/></svg>
<div class="a" style="left:778px;top:338px;width:1px;height:11px;background:#6d707a;"></div>
<div class="a" style="left:781px;top:338px;width:1px;height:11px;background:#6d707a;"></div>
<div class="a" style="left:788px;top:349px;width:236px;height:22px;background:#353844;"></div>
<div class="a" style="left:795px;top:395px;width:7px;height:1px;background:#4a4d57;"></div>
<div class="a" style="left:911px;top:395px;width:108px;height:1px;background:#4a4d57;"></div>
<div class="a" style="left:841px;top:408px;width:14px;height:14px;background:#1f2535;border-radius:2px"></div>
<div class="a" style="left:858px;top:423px;width:160px;height:1px;background:#4a4d57;"></div>
<div class="a" style="left:830px;top:431px;width:25px;height:14px;background:#1f2535;border-radius:2px"></div>
<div class="a" style="left:858px;top:446px;width:160px;height:1px;background:#4a4d57;"></div>
<svg class="a" style="left:1013px;top:460px;" width="6" height="4" viewBox="0 0 6 4"><path d="M0.6 0.6 L3 3 L5.4 0.6" fill="none" stroke="#d0d0d4" stroke-width="1.1"/></svg>
<div class="a" style="left:860px;top:469px;width:160px;height:1px;background:#4a4d57;"></div>
<div class="a" style="left:795px;top:497px;width:7px;height:1px;background:#4a4d57;"></div>
<div class="a" style="left:928px;top:497px;width:75px;height:1px;background:#4a4d57;"></div>
<svg class="a" style="left:1002px;top:488px;" width="19" height="19" viewBox="0 0 19 19"><circle cx="9.5" cy="9.5" r="8.6" fill="none" stroke="#d6d6da" stroke-width="1.1"/><path d="M6.5 6.5 L12.5 12.5 M12.5 6.5 L6.5 12.5" stroke="#d6d6da" stroke-width="1.2"/></svg>
<div class="a" style="left:841px;top:513px;width:14px;height:14px;background:#1f2535;border-radius:2px"></div>
<div class="a" style="left:858px;top:528px;width:160px;height:1px;background:#4a4d57;"></div>
<div class="a" style="left:808px;top:536px;width:47px;height:14px;background:#1f2535;border-radius:2px"></div>
<div class="a" style="left:860px;top:535px;width:110px;height:18px;background:#e9a15c;border-radius:2px"></div>
<div class="a" style="left:857px;top:556px;width:146px;height:1px;background:#4a4d57;"></div>
<svg class="a" style="left:1005px;top:537px;" width="15" height="14" viewBox="0 0 15 14"><path d="M3.2 1 Q1.5 1 1.5 2.8 V5.3 Q1.5 7 0.4 7 Q1.5 7 1.5 8.7 V11.2 Q1.5 13 3.2 13 M11.8 1 Q13.5 1 13.5 2.8 V5.3 Q13.5 7 14.6 7 Q13.5 7 13.5 8.7 V11.2 Q13.5 13 11.8 13" fill="none" stroke="#e8e8ec" stroke-width="1.4"/><path d="M8.8 1.5 L4.3 7.6 H7.2 L5.8 12.5 L10.7 6.2 H7.9 Z" fill="#f0a040"/></svg>
<svg class="a" style="left:862px;top:563px;" width="10" height="11" viewBox="0 0 10 11"><rect x="0.6" y="0.6" width="8.8" height="9.8" rx="1.2" fill="none" stroke="#d6d6da" stroke-width="1.1"/><rect x="4.3" y="2.2" width="1.4" height="1.3" fill="#e0e0e4"/><path d="M3.5 4.6 H5 V8.2 M3.4 8.3 H6.6" fill="none" stroke="#e0e0e4" stroke-width="1.1"/></svg>
<svg class="a" style="left:1005px;top:563px;" width="15" height="14" viewBox="0 0 15 14"><path d="M3.2 1 Q1.5 1 1.5 2.8 V5.3 Q1.5 7 0.4 7 Q1.5 7 1.5 8.7 V11.2 Q1.5 13 3.2 13 M11.8 1 Q13.5 1 13.5 2.8 V5.3 Q13.5 7 14.6 7 Q13.5 7 13.5 8.7 V11.2 Q13.5 13 11.8 13" fill="none" stroke="#e8e8ec" stroke-width="1.4"/><path d="M8.8 1.5 L4.3 7.6 H7.2 L5.8 12.5 L10.7 6.2 H7.9 Z" fill="#f0a040"/></svg>
<div class="a" style="left:874px;top:578px;width:129px;height:1px;background:#4a4d57;"></div>
<div class="a" style="left:878px;top:587px;width:12px;height:12px;background:transparent;border:1.2px solid #b8b8be;border-radius:2px"></div>
<svg class="a" style="left:963px;top:586px;" width="10" height="11" viewBox="0 0 10 11"><rect x="0.6" y="0.6" width="8.8" height="9.8" rx="1.2" fill="none" stroke="#d6d6da" stroke-width="1.1"/><rect x="4.3" y="2.2" width="1.4" height="1.3" fill="#e0e0e4"/><path d="M3.5 4.6 H5 V8.2 M3.4 8.3 H6.6" fill="none" stroke="#e0e0e4" stroke-width="1.1"/></svg>
<div class="a" style="left:878px;top:610px;width:12px;height:12px;background:transparent;border:1.2px solid #b8b8be;border-radius:2px"></div>
<svg class="a" style="left:862px;top:632px;" width="10" height="11" viewBox="0 0 10 11"><rect x="0.6" y="0.6" width="8.8" height="9.8" rx="1.2" fill="none" stroke="#d6d6da" stroke-width="1.1"/><rect x="4.3" y="2.2" width="1.4" height="1.3" fill="#e0e0e4"/><path d="M3.5 4.6 H5 V8.2 M3.4 8.3 H6.6" fill="none" stroke="#e0e0e4" stroke-width="1.1"/></svg>
<div class="a" style="left:876px;top:646px;width:142px;height:1px;background:#4a4d57;"></div>
<svg class="a" style="left:7px;top:630px;" width="11" height="11" viewBox="0 0 11 11"><circle cx="5.3" cy="5.3" r="4.6" fill="none" stroke="#b9553b" stroke-width="1.1"/><path d="M3.6 3.6 L7 7 M7 3.6 L3.6 7" stroke="#c75a3c" stroke-width="1.1"/></svg>
<svg class="a" style="left:28px;top:629.5px;" width="11" height="11" viewBox="0 0 11 11"><path d="M5.3 1 L9.9 9.6 H0.7 Z" fill="none" stroke="#d69a3c" stroke-width="1.2" stroke-linejoin="round"/><path d="M5.3 4 V6.8 M5.3 7.7 V8.5" stroke="#d69a3c" stroke-width="1.1"/></svg>
<div class="a" style="left:734px;top:636px;width:5px;height:1px;background:#d8d8dc;"></div>
<svg class="a" style="left:770px;top:631px;" width="7" height="7" viewBox="0 0 7 7"><path d="M3.5 0 V7 M0 3.5 H7" stroke="#e0e0e4" stroke-width="1.1"/></svg>
<div class="a" style="left:222px;top:648px;width:70px;height:16px;background:#4ca2f7;border-radius:3px"></div>
<svg class="a" style="left:8px;top:673px;" width="11" height="9" viewBox="0 0 11 9"><path d="M0.7 4.5 L3.8 7.8 L10.3 0.8" fill="none" stroke="#d8d8dc" stroke-width="1.2"/></svg>
<div class="a" style="left:55px;top:667px;width:1px;height:23px;background:#252731;"></div>
<svg class="a" style="left:65px;top:671px;" width="9" height="13" viewBox="0 0 9 13"><path d="M4.5 0.5 V9 M1 5.6 L4.5 9.2 L8 5.6 M0.5 12.3 H8.5" fill="none" stroke="#d8d8dc" stroke-width="1.1"/></svg>
<svg class="a" style="left:105px;top:671px;" width="9" height="13" viewBox="0 0 9 13"><path d="M4.5 12 V2 M1 5.4 L4.5 1.8 L8 5.4 M0.5 12.3 H8.5" fill="none" stroke="#d8d8dc" stroke-width="1.1"/></svg>
<svg class="a" style="left:145px;top:674px;" width="8" height="8" viewBox="0 0 8 8"><path d="M0.6 0.6 L7.4 7.4 M7.4 0.6 L0.6 7.4" stroke="#d8d8dc" stroke-width="1.1"/></svg>
<div class="a" style="left:189px;top:667px;width:1px;height:23px;background:#252731;"></div>
<svg class="a" style="left:563px;top:671px;" width="11" height="13" viewBox="0 0 11 13"><path d="M5.5 12.5 V1.5 M1 6 L5.5 1.2 L10 6" fill="none" stroke="#d8d8dc" stroke-width="1.1"/></svg>
<div class="a" style="left:616px;top:667px;width:1px;height:23px;background:#252731;"></div>
<svg class="a" style="left:624px;top:670px;" width="13" height="13" viewBox="0 0 13 13"><path d="M5 1 Q5.5 5.5 9.5 6 Q5.5 6.5 5 11 Q4.5 6.5 0.5 6 Q4.5 5.5 5 1 Z" fill="none" stroke="#d8d8dc" stroke-width="1"/><path d="M10.5 8.5 Q10.7 10.3 12.5 10.5 Q10.7 10.7 10.5 12.5 Q10.3 10.7 8.5 10.5 Q10.3 10.3 10.5 8.5 Z" fill="none" stroke="#d8d8dc" stroke-width="0.9"/><path d="M10.5 0.5 Q10.6 1.9 12 2 Q10.6 2.1 10.5 3.5 Q10.4 2.1 9 2 Q10.4 1.9 10.5 0.5Z" fill="#d8d8dc"/></svg>
<svg class="a" style="left:647px;top:670px;" width="14" height="14" viewBox="0 0 14 14"><path d="M0.6 6 H3.5 V13.2 H0.6 Z M3.5 6.5 L6.5 1.2 Q8 0.6 8.2 2.2 L7.5 5.5 H12 Q13.4 5.8 13 7.2 L11.5 12.2 Q11 13.2 9.8 13.2 H3.5" fill="none" stroke="#d8d8dc" stroke-width="1.1" stroke-linejoin="round"/></svg>
<svg class="a" style="left:672px;top:672px;" width="12" height="10" viewBox="0 0 12 10"><path d="M0 1 H12 M0 5 H12 M0 9 H12" stroke="#d8d8dc" stroke-width="1.2"/></svg>
<svg class="a" style="left:724px;top:671px;" width="16" height="13" viewBox="0 0 16 13"><path d="M1 1 L6.5 6.5 L1 12" fill="none" stroke="#4ba1f6" stroke-width="1.2"/><path d="M8 12.4 H15.5" stroke="#4ba1f6" stroke-width="1.1"/></svg>
<svg class="a" style="left:825px;top:676px;" width="7" height="4" viewBox="0 0 7 4"><path d="M0 0 H7 L3.5 4 Z" fill="#a0a2aa"/></svg>
<svg class="a" style="left:842px;top:673px;" width="10" height="10" viewBox="0 0 10 10"><path d="M0.7 0.7 L9.3 9.3 M9.3 0.7 L0.7 9.3" stroke="#e0e0e4" stroke-width="1.2"/></svg>
<div class="a" style="left:862px;top:667px;width:1px;height:23px;background:#252731;"></div>
<svg class="a" style="left:871px;top:673px;" width="12" height="10" viewBox="0 0 12 10"><path d="M0.7 5 L4.2 8.8 L11.3 0.8" fill="none" stroke="#d8d8dc" stroke-width="1.2"/></svg>
<div class="a" style="left:949px;top:667px;width:1px;height:23px;background:#252731;"></div>
<svg class="a" style="left:956px;top:671px;" width="14" height="13" viewBox="0 0 14 13"><path d="M4 12.3 L0.8 9 L8.2 1.3 L13.2 6.3 L7.2 12.3 Z M4 5.5 L9.5 11 M4 12.3 H12.5" fill="none" stroke="#d8d8dc" stroke-width="1.1" stroke-linejoin="round"/></svg>
<svg class="a" style="left:981px;top:670px;" width="12" height="14" viewBox="0 0 12 14"><g fill="none" stroke="#d8d8dc" stroke-width="1.1"><path d="M3.5 3.5 Q3.5 0.8 6 0.8 Q8.5 0.8 8.5 3.5"/><rect x="2.2" y="3.5" width="7.6" height="9.5" rx="3"/><path d="M6 4 V13 M0.3 6 H2.2 M9.8 6 H11.7 M0.3 9.5 H2.2 M9.8 9.5 H11.7"/></g></svg>
<div class="a" style="left:1003px;top:667px;width:1px;height:23px;background:#252731;"></div>
<svg class="a" style="left:1010px;top:673px;" width="14" height="8" viewBox="0 0 14 8"><path d="M0.8 7.2 L7 1 L13.2 7.2" fill="none" stroke="#d8d8dc" stroke-width="1.2"/></svg>
<div class="t" style="left:33px;top:3.87px;font-size:9.6px;color:#eeeeee;transform:scaleX(0.937);">index.php</div>
<div class="t" style="left:123px;top:3.87px;font-size:9.6px;color:#dcdcdc;transform:scaleX(0.888);">itens</div>
<div class="t" style="left:195px;top:3.87px;font-size:9.6px;color:#dcdcdc;transform:scaleX(0.903);">buscar_itens.php</div>
<div class="t" style="left:349px;top:22.87px;font-size:9.6px;color:#4ba1f6;transform:scaleX(0.904);">Design</div>
<div class="t" style="left:386px;top:22.87px;font-size:9.6px;color:#dcdcdf;transform:scaleX(0.915);">Code</div>
<div class="t" style="left:416px;top:22.87px;font-size:9.6px;color:#dcdcdf;transform:scaleX(0.964);">Split</div>
<div class="t" style="left:796px;top:22.87px;font-size:9.6px;color:#4ba1f6;transform:scaleX(0.920);">App Structure</div>
<div class="t" style="left:860px;top:22.87px;font-size:9.6px;color:#dcdcdf;transform:scaleX(0.904);">Design</div>
<div class="t" style="left:897px;top:22.87px;font-size:9.6px;color:#dcdcdf;transform:scaleX(0.842);">Styles</div>
<div class="t" style="left:929px;top:22.87px;font-size:9.6px;color:#dcdcdf;transform:scaleX(0.938);">DOM</div>
<div class="t" style="left:28.5px;top:63.05px;font-size:7.5px;color:#b4b5bc;transform:scaleX(0.899);-webkit-text-stroke:0.1px currentColor;">0</div>
<div class="t" style="left:63.0px;top:63.05px;font-size:7.5px;color:#b4b5bc;transform:scaleX(0.899);-webkit-text-stroke:0.1px currentColor;">50</div>
<div class="t" style="left:97.5px;top:63.05px;font-size:7.5px;color:#b4b5bc;transform:scaleX(0.899);-webkit-text-stroke:0.1px currentColor;">100</div>
<div class="t" style="left:132.0px;top:63.05px;font-size:7.5px;color:#b4b5bc;transform:scaleX(0.899);-webkit-text-stroke:0.1px currentColor;">150</div>
<div class="t" style="left:166.5px;top:63.05px;font-size:7.5px;color:#b4b5bc;transform:scaleX(0.899);-webkit-text-stroke:0.1px currentColor;">200</div>
<div class="t" style="left:201.0px;top:63.05px;font-size:7.5px;color:#b4b5bc;transform:scaleX(0.899);-webkit-text-stroke:0.1px currentColor;">250</div>
<div class="t" style="left:235.4px;top:63.05px;font-size:7.5px;color:#b4b5bc;transform:scaleX(0.899);-webkit-text-stroke:0.1px currentColor;">300</div>
<div class="t" style="left:269.9px;top:63.05px;font-size:7.5px;color:#b4b5bc;transform:scaleX(0.899);-webkit-text-stroke:0.1px currentColor;">350</div>
<div class="t" style="left:304.4px;top:63.05px;font-size:7.5px;color:#b4b5bc;transform:scaleX(0.899);-webkit-text-stroke:0.1px currentColor;">400</div>
<div class="t" style="left:338.9px;top:63.05px;font-size:7.5px;color:#b4b5bc;transform:scaleX(0.899);-webkit-text-stroke:0.1px currentColor;">450</div>
<div class="t" style="left:373.4px;top:63.05px;font-size:7.5px;color:#b4b5bc;transform:scaleX(0.899);-webkit-text-stroke:0.1px currentColor;">500</div>
<div class="t" style="left:407.9px;top:63.05px;font-size:7.5px;color:#b4b5bc;transform:scaleX(0.899);-webkit-text-stroke:0.1px currentColor;">550</div>
<div class="t" style="left:442.4px;top:63.05px;font-size:7.5px;color:#b4b5bc;transform:scaleX(0.899);-webkit-text-stroke:0.1px currentColor;">600</div>
<div class="t" style="left:476.9px;top:63.05px;font-size:7.5px;color:#b4b5bc;transform:scaleX(0.899);-webkit-text-stroke:0.1px currentColor;">650</div>
<div class="t" style="left:511.4px;top:63.05px;font-size:7.5px;color:#b4b5bc;transform:scaleX(0.899);-webkit-text-stroke:0.1px currentColor;">700</div>
<div class="t" style="left:545.9px;top:63.05px;font-size:7.5px;color:#b4b5bc;transform:scaleX(0.899);-webkit-text-stroke:0.1px currentColor;">750</div>
<div class="t" style="left:580.3px;top:63.05px;font-size:7.5px;color:#b4b5bc;transform:scaleX(0.899);-webkit-text-stroke:0.1px currentColor;">800</div>
<div class="t" style="left:614.8px;top:63.05px;font-size:7.5px;color:#b4b5bc;transform:scaleX(0.899);-webkit-text-stroke:0.1px currentColor;">850</div>
<div class="t" style="left:649.3px;top:63.05px;font-size:7.5px;color:#b4b5bc;transform:scaleX(0.899);-webkit-text-stroke:0.1px currentColor;">900</div>
<div class="t" style="left:683.8px;top:63.05px;font-size:7.5px;color:#b4b5bc;transform:scaleX(0.899);-webkit-text-stroke:0.1px currentColor;">950</div>
<div class="t" style="left:718.3px;top:63.05px;font-size:7.5px;color:#b4b5bc;transform:scaleX(0.899);-webkit-text-stroke:0.1px currentColor;">1000</div>
<div class="t" style="left:752.8px;top:63.05px;font-size:7.5px;color:#b4b5bc;transform:scaleX(0.899);-webkit-text-stroke:0.1px currentColor;">1050</div>
<div class="t" style="left:301.7px;top:90.34px;font-size:25px;color:#ffffff;font-weight:bold;transform:scaleX(0.977);">Lista de mercado</div>
<div class="t" style="left:227.5px;top:158.27px;font-size:11.5px;color:#7b8188;transform:scaleX(0.951);">Adicione um item...</div>
<div class="t" style="left:511px;top:158.57px;font-size:11.5px;color:#ffffff;transform:scaleX(0.959);">Adicionar</div>
<div class="t" style="left:385px;top:219.91px;font-size:17px;color:#76828e;transform:scaleX(0.912);-webkit-text-stroke:0;">Row</div>
<div class="t" style="left:229px;top:175.87px;font-size:9.6px;color:#e4e4e8;transform:scaleX(0.885);">Row</div>
<div class="t" style="left:248px;top:175.87px;font-size:9.6px;color:#7ec3cf;transform:scaleX(0.889);">{{sc_listar_itens.data.query_itens}}</div>
<div class="t" style="left:218px;top:276.11px;font-size:17px;color:#212529;transform:scaleX(0.967);">Comprados</div>
<div class="t" style="left:232.5px;top:310.69px;font-size:11px;color:#2e3236;transform:scaleX(0.990);">Default checkbox</div>
<div class="t" style="left:870px;top:63.89px;font-size:11px;color:#a6a6a6;transform:scaleX(0.981);-webkit-text-stroke:0;">Pressione Alt+Z para usar o</div>
<div class="t" style="left:870px;top:78.19px;font-size:11px;color:#a6a6a6;transform:scaleX(1.019);-webkit-text-stroke:0;">overlay durante o jogo do</div>
<div class="t" style="left:870px;top:92.49px;font-size:11px;color:#a6a6a6;transform:scaleX(0.942);-webkit-text-stroke:0;">GeForce Experience</div>
<div class="t" style="left:855px;top:133.87px;font-size:9.6px;color:#ffffff;transform:scaleX(0.900);">Row repeat1</div>
<div class="t" style="left:863px;top:151.87px;font-size:9.6px;color:#dcdcdf;transform:scaleX(0.937);">Column</div>
<div class="t" style="left:871px;top:169.87px;font-size:9.6px;color:#dcdcdf;transform:scaleX(0.913);">Flex Container</div>
<div class="t" style="left:880px;top:187.87px;font-size:9.6px;color:#dcdcdf;transform:scaleX(0.930);">Checkbox Control</div>
<div class="t" style="left:880px;top:205.87px;font-size:9.6px;color:#dcdcdf;transform:scaleX(0.897);">Flex Container</div>
<div class="t" style="left:888px;top:223.87px;font-size:9.6px;color:#dcdcdf;transform:scaleX(0.937);">Button</div>
<div class="t" style="left:918px;top:223.87px;font-size:9.6px;color:#a9c46b;transform:scaleX(0.910);">btn5</div>
<div class="t" style="left:896px;top:241.87px;font-size:9.6px;color:#dcdcdf;transform:scaleX(0.921);">Font Awesome Icon</div>
<div class="t" style="left:888px;top:259.87px;font-size:9.6px;color:#dcdcdf;transform:scaleX(0.937);">Button</div>
<div class="t" style="left:918px;top:259.87px;font-size:9.6px;color:#a9c46b;transform:scaleX(0.910);">btn5</div>
<div class="t" style="left:896px;top:277.87px;font-size:9.6px;color:#dcdcdf;transform:scaleX(0.921);">Font Awesome Icon</div>
<div class="t" style="left:855px;top:295.87px;font-size:9.6px;color:#dcdcdf;transform:scaleX(0.885);">Row</div>
<div class="t" style="left:855px;top:313.87px;font-size:9.6px;color:#dcdcdf;transform:scaleX(0.885);">Row</div>
<div class="t" style="left:863px;top:331.87px;font-size:9.6px;color:#dcdcdf;transform:scaleX(0.937);">Column</div>
<div class="t" style="left:791px;top:355.87px;font-size:9.6px;color:#dcdcdf;transform:scaleX(0.983);">Properties</div>
<div class="t" style="left:909px;top:355.87px;font-size:9.6px;color:#4ba1f6;transform:scaleX(0.908);">General</div>
<div class="t" style="left:950px;top:355.87px;font-size:9.6px;color:#dcdcdf;transform:scaleX(0.962);">Attributes</div>
<div class="t" style="left:998px;top:355.87px;font-size:9.6px;color:#dcdcdf;transform:scaleX(0.954);">Events</div>
<div class="t" style="left:809px;top:390.19px;font-size:11px;color:#e2e2e6;transform:scaleX(0.766);letter-spacing:1.7px;-webkit-text-stroke:0.1px currentColor;">ROW PROPERTIES</div>
<div class="t" style="left:845px;top:411.38px;font-size:9px;color:#4ba1f6;transform:scaleX(0.944);">ID</div>
<div class="t" style="left:860px;top:411.20px;font-size:10.4px;color:#f0f0f2;transform:scaleX(0.964);-webkit-text-stroke:0.12px currentColor;">repeat1</div>
<div class="t" style="left:832px;top:433.87px;font-size:9.6px;color:#4ba1f6;transform:scaleX(0.916);">Class</div>
<div class="t" style="left:860px;top:434.20px;font-size:10.4px;color:#f0f0f2;transform:scaleX(1.014);-webkit-text-stroke:0.12px currentColor;">row</div>
<div class="t" style="left:810px;top:457.87px;font-size:9.6px;color:#dcdcdf;transform:scaleX(0.905);">Convert To</div>
<div class="t" style="left:862px;top:457.00px;font-size:9.8px;color:#7d7f88;transform:scaleX(0.991);">Choose Type ...</div>
<div class="t" style="left:809px;top:492.19px;font-size:11px;color:#e2e2e6;transform:scaleX(0.779);letter-spacing:1.7px;-webkit-text-stroke:0.1px currentColor;">MASONRY REPEATER</div>
<div class="t" style="left:845px;top:516.38px;font-size:9px;color:#4ba1f6;transform:scaleX(0.944);">ID</div>
<div class="t" style="left:860px;top:516.20px;font-size:10.4px;color:#f0f0f2;transform:scaleX(0.964);-webkit-text-stroke:0.12px currentColor;">repeat1</div>
<div class="t" style="left:810px;top:538.87px;font-size:9.6px;color:#4ba1f6;transform:scaleX(0.948);">Expression</div>
<div class="t" style="left:863px;top:539.70px;font-size:9.8px;color:#2a2a2a;transform:scaleX(1.010);-webkit-text-stroke:0.12px currentColor;">sc_listar_iten..query_i...</div>
<div class="t" style="left:811px;top:565.87px;font-size:9.6px;color:#dcdcdf;transform:scaleX(0.907);">Unique Key</div>
<div class="t" style="left:897px;top:588.87px;font-size:9.6px;color:#dcdcdf;transform:scaleX(0.914);">Preserve Order</div>
<div class="t" style="left:897px;top:611.87px;font-size:9.6px;color:#dcdcdf;transform:scaleX(0.962);">Animated</div>
<div class="t" style="left:822px;top:633.87px;font-size:9.6px;color:#dcdcdf;transform:scaleX(0.937);">Duration</div>
<div class="t" style="left:877px;top:634.20px;font-size:10.4px;color:#f0f0f2;transform:scaleX(0.980);-webkit-text-stroke:0.12px currentColor;">400</div>
<div class="t" style="left:20px;top:631.87px;font-size:9.6px;color:#d8d8dc;transform:scaleX(0.936);">0</div>
<div class="t" style="left:41px;top:631.87px;font-size:9.6px;color:#d8d8dc;transform:scaleX(0.936);">0</div>
<div class="t" style="left:57px;top:631.87px;font-size:9.6px;color:#d8d8dc;transform:scaleX(0.865);">Ready</div>
<div class="t" style="left:745px;top:631.37px;font-size:9.6px;color:#e0e0e4;transform:scaleX(0.855);">100%</div>
<div class="t" style="left:7px;top:651.87px;font-size:9.6px;color:#dcdcdf;transform:scaleX(1.057);">body</div>
<div class="t" style="left:29px;top:651.87px;font-size:9.6px;color:#7fb3de;transform:scaleX(0.848);">#index</div>
<div class="t" style="left:59px;top:651.87px;font-size:9.6px;color:#dcdcdf;transform:scaleX(0.713);">&gt;</div>
<div class="t" style="left:92px;top:651.87px;font-size:9.6px;color:#dcdcdf;transform:scaleX(0.713);">&gt;</div>
<div class="t" style="left:156px;top:651.87px;font-size:9.6px;color:#dcdcdf;transform:scaleX(0.713);">&gt;</div>
<div class="t" style="left:216px;top:651.87px;font-size:9.6px;color:#dcdcdf;transform:scaleX(0.713);">&gt;</div>
<div class="t" style="left:296px;top:651.87px;font-size:9.6px;color:#dcdcdf;transform:scaleX(0.713);">&gt;</div>
<div class="t" style="left:359px;top:651.87px;font-size:9.6px;color:#dcdcdf;transform:scaleX(0.713);">&gt;</div>
<div class="t" style="left:444px;top:651.87px;font-size:9.6px;color:#dcdcdf;transform:scaleX(0.713);">&gt;</div>
<div class="t" style="left:494px;top:651.87px;font-size:9.6px;color:#dcdcdf;transform:scaleX(0.713);">&gt;</div>
<div class="t" style="left:67px;top:651.87px;font-size:9.6px;color:#dcdcdf;transform:scaleX(0.913);">main</div>
<div class="t" style="left:101px;top:651.87px;font-size:9.6px;color:#dcdcdf;transform:scaleX(1.059);">div</div>
<div class="t" style="left:114px;top:651.87px;font-size:9.6px;color:#b6c46e;transform:scaleX(0.912);">.row.mt-4</div>
<div class="t" style="left:164px;top:651.87px;font-size:9.6px;color:#dcdcdf;transform:scaleX(1.059);">div</div>
<div class="t" style="left:177px;top:651.87px;font-size:9.6px;color:#b6c46e;transform:scaleX(0.885);">.col.w-50</div>
<div class="t" style="left:226px;top:651.87px;font-size:9.6px;color:#ffffff;transform:scaleX(0.922);">div#repeat1.row</div>
<div class="t" style="left:302px;top:651.87px;font-size:9.6px;color:#dcdcdf;transform:scaleX(1.059);">div</div>
<div class="t" style="left:315px;top:651.87px;font-size:9.6px;color:#b6c46e;transform:scaleX(0.949);">.pt-2.pb-2</div>
<div class="t" style="left:368px;top:651.87px;font-size:9.6px;color:#dcdcdf;transform:scaleX(1.059);">div</div>
<div class="t" style="left:381px;top:651.87px;font-size:9.6px;color:#b6c46e;transform:scaleX(0.913);">.d-flex.flex-row</div>
<div class="t" style="left:452px;top:651.87px;font-size:9.6px;color:#dcdcdf;transform:scaleX(1.059);">div</div>
<div class="t" style="left:465px;top:651.87px;font-size:9.6px;color:#b6c46e;transform:scaleX(0.918);">.d-flex</div>
<div class="t" style="left:503px;top:651.87px;font-size:9.6px;color:#dcdcdf;transform:scaleX(1.012);">button</div>
<div class="t" style="left:530px;top:651.87px;font-size:9.6px;color:#7fb3de;transform:scaleX(0.916);">#btn5</div>
<div class="t" style="left:552px;top:651.87px;font-size:9.6px;color:#b6c46e;transform:scaleX(0.968);">.btn.btn-danger</div>
<div class="t" style="left:23px;top:673.87px;font-size:9.6px;color:#dcdcdf;transform:scaleX(0.882);">Check</div>
<div class="t" style="left:79px;top:673.87px;font-size:9.6px;color:#dcdcdf;transform:scaleX(0.905);">Get</div>
<div class="t" style="left:119px;top:673.87px;font-size:9.6px;color:#dcdcdf;transform:scaleX(0.972);">Put</div>
<div class="t" style="left:158px;top:673.87px;font-size:9.6px;color:#dcdcdf;transform:scaleX(1.002);">Abort</div>
<div class="t" style="left:579px;top:673.87px;font-size:9.6px;color:#dcdcdf;transform:scaleX(0.889);">Publish</div>
<div class="t" style="left:687px;top:673.87px;font-size:9.6px;color:#dcdcdf;transform:scaleX(0.972);">Output</div>
<div class="t" style="left:744px;top:673.87px;font-size:9.6px;color:#4ba1f6;transform:scaleX(0.893);">Local Web Server</div>
<div class="t" style="left:886px;top:673.87px;font-size:9.6px;color:#dcdcdf;transform:scaleX(0.873);">System Check</div>
<svg class="a" style="left:392.5px;top:167.5px;" width="18" height="18" viewBox="0 0 18 18"><circle cx="9" cy="9.6" r="8.3" fill="rgba(0,0,0,0.06)"/><circle cx="9" cy="9" r="8.1" fill="#3e8ff0"/><path d="M9 5.4 V12.6 M5.4 9 H12.6" stroke="#fff" stroke-width="1.5"/></svg>
<svg class="a" style="left:392px;top:218.2px;" width="18" height="18" viewBox="0 0 18 18"><circle cx="9" cy="9.6" r="8.3" fill="rgba(0,0,0,0.06)"/><circle cx="9" cy="9" r="8.1" fill="#b44cf2"/><path d="M9 5.4 V12.6 M5.4 9 H12.6" stroke="#fff" stroke-width="1.5"/></svg>
<svg class="a" style="left:392px;top:269.5px;" width="18" height="18" viewBox="0 0 18 18"><circle cx="9" cy="9.6" r="8.3" fill="rgba(0,0,0,0.06)"/><circle cx="9" cy="9" r="8.1" fill="#3e8ff0"/><path d="M9 5.4 V12.6 M5.4 9 H12.6" stroke="#fff" stroke-width="1.5"/></svg>
<svg class="a" style="left:190px;top:170px;" width="440" height="110" viewBox="0 0 440 110"><g transform="translate(-190,-170)"><path d="M201 177 C 200.5 200, 201 240, 201.5 262 C 201.7 268, 202 272, 205 272 C 215 272, 222 267, 234 266 C 260 266.5, 280 269, 300 270 C 315 270.5, 325 268.5, 335 268.5 C 345 268.5, 352 271.5, 365 272 C 400 273, 440 273.5, 480 272.8 C 530 272.5, 570 273, 590 272 C 600 271, 607 270, 610 266 C 614 258, 617 245, 618.5 230 C 620 215, 621.5 195, 621.5 186 C 621.5 181, 619 179.8, 615 179.2 C 607 178.2, 600 177.8, 597.3 178" fill="none" stroke="#e3141b" stroke-width="4.4" stroke-linecap="round" stroke-linejoin="round"/></g></svg>
</body></html>
